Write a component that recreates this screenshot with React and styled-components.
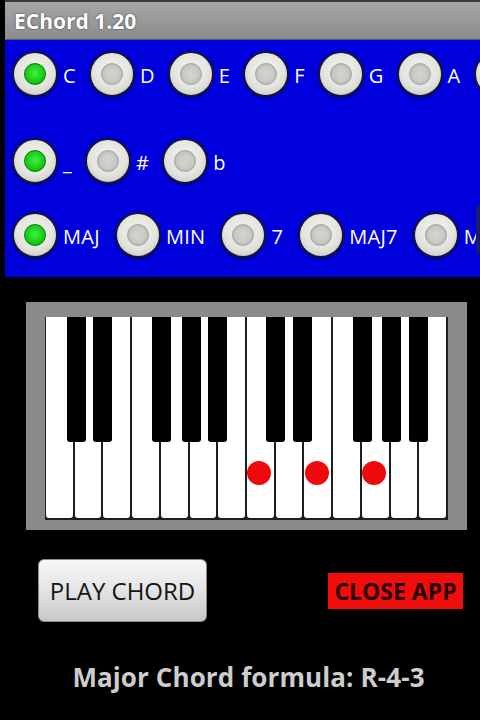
import React from 'react';
import styled, { createGlobalStyle } from 'styled-components';

const Global = createGlobalStyle`
  html, body { margin: 0; padding: 0; background: #000; }
  body { width: 480px; height: 720px; overflow: hidden; font-family: "Open Sans", "Noto Sans", sans-serif; }
  * { box-sizing: border-box; }
`;

const Screen = styled.div`
  width: 480px;
  height: 720px;
  background: #000;
  padding-left: 5px;
  display: flex;
  flex-direction: column;
`;

const TitleBar = styled.div`
  height: 40px;
  flex: none;
  border-top: 2px solid #3a3a3a;
  border-bottom: 1px solid #5a5a5a;
  background: linear-gradient(#a6a6a6, #8c8c8c);
  display: flex;
  align-items: center;
  padding-left: 9px;
  color: #fff;
  font-weight: 700;
  font-size: 21px;
  text-shadow: 0 0 2px rgba(0, 0, 0, 0.7);
`;

const Panel = styled.div`
  position: relative;
  height: 237px;
  flex: none;
  background: #0000dc;
  overflow: hidden;
  padding-left: 7px;
`;

const Scroll = styled.div`
  position: absolute;
  right: 0;
  top: 165px;
  width: 4px;
  height: 50px;
  background: #1a1a70;
  border-radius: 2px;
`;

const Row = styled.div`
  display: flex;
  align-items: center;
  white-space: nowrap;
  gap: ${p => p.$gap}px;
  margin-top: ${p => p.$top}px;
`;

const Item = styled.div`
  display: flex;
  align-items: center;
  gap: 5px;
  flex: none;
`;

const RadioOuter = styled.div`
  width: 46px;
  height: 46px;
  border-radius: 50%;
  border: 2px solid #14143c;
  background: radial-gradient(circle at 50% 42%, #f6f6f2 0%, #e4e4de 55%, #bcbcb4 100%);
  box-shadow: 0 1px 2px rgba(0, 0, 0, 0.5);
  display: flex;
  align-items: center;
  justify-content: center;
  flex: none;
`;

const RadioDot = styled.div`
  width: 22px;
  height: 22px;
  border-radius: 50%;
  border: 1px solid ${p => (p.$on ? '#087a08' : '#a4a4a0')};
  background: ${p =>
    p.$on
      ? 'radial-gradient(circle at 50% 45%, #44f044 0%, #14cc14 60%, #0a8a0a 100%)'
      : 'radial-gradient(circle at 50% 50%, #d4d4d0 0%, #cacac6 50%, #a8a8a4 100%)'};
`;

const Label = styled.span`
  color: #fff;
  font-size: 20px;
  line-height: 1;
  padding-top: 4px;
  letter-spacing: 0.3px;
`;

const Frame = styled.div`
  margin: 25px 0 0 21px;
  width: 441px;
  height: 228px;
  flex: none;
  background: #8a8a8a;
  padding: 15px 19px 10px 19px;
`;

const Keys = styled.div`
  position: relative;
  display: flex;
  height: 100%;
  background: #1e1e1e;
  padding-left: 1px;
`;

const WhiteKey = styled.div`
  flex: 1;
  background: #fff;
  margin: 0 2px 2px 0;
  border-radius: 0 0 3px 3px;
`;

const BlackKey = styled.div`
  position: absolute;
  top: 0;
  width: 19px;
  height: 125px;
  background: #000;
  border-radius: 0 0 3px 3px;
`;

const Dot = styled.div`
  position: absolute;
  top: 144px;
  width: 24px;
  height: 24px;
  border-radius: 50%;
  background: #ee0a0a;
`;

const Buttons = styled.div`
  display: flex;
  align-items: center;
  margin-top: 29px;
  padding: 0 17px 0 33px;
`;

const PlayButton = styled.div`
  width: 169px;
  height: 63px;
  border-radius: 6px;
  border: 1px solid #8a8a8a;
  background: linear-gradient(#f6f6f6, #e6e6e6 45%, #c8c8c8);
  color: #141414;
  font-size: 24px;
  display: flex;
  align-items: center;
  justify-content: center;
`;

const CloseButton = styled.div`
  margin-left: auto;
  width: 135px;
  height: 36px;
  background: #f20d0d;
  color: #2a0404;
  font-weight: 700;
  font-size: 23px;
  display: flex;
  align-items: center;
  justify-content: center;
`;

const Formula = styled.div`
  margin-top: 38px;
  padding-left: 12px;
  text-align: center;
  color: #cdcdcd;
  font-weight: 700;
  font-size: 26px;
  letter-spacing: 0.1px;
  line-height: 34px;
`;

const rows = [
  { top: 11, gap: 13, items: ['C', 'D', 'E', 'F', 'G', 'A', 'B'] },
  { top: 41, gap: 13, items: ['_', '#', 'b'] },
  { top: 28, gap: 15, items: ['MAJ', 'MIN', '7', 'MAJ7', 'MIN7'] },
];

const blackLefts = [22, 48, 107, 137, 163, 221, 248, 308, 337, 364];
const dots = [214, 272, 329];

export default function App() {
  return (
    <Screen>
      <Global />
      <TitleBar>EChord 1.20</TitleBar>
      <Panel>
        {rows.map((r, ri) => (
          <Row key={ri} $top={r.top} $gap={r.gap}>
            {r.items.map((t, i) => (
              <Item key={t}>
                <RadioOuter>
                  <RadioDot $on={i === 0} />
                </RadioOuter>
                <Label>{t}</Label>
              </Item>
            ))}
          </Row>
        ))}
        <Scroll />
      </Panel>
      <Frame>
        <Keys>
          {Array.from({ length: 14 }).map((_, i) => (
            <WhiteKey key={i} />
          ))}
          {blackLefts.map(l => (
            <BlackKey key={l} style={{ left: l }} />
          ))}
          {dots.map(c => (
            <Dot key={c} style={{ left: c - 12 }} />
          ))}
        </Keys>
      </Frame>
      <Buttons>
        <PlayButton>PLAY CHORD</PlayButton>
        <CloseButton>CLOSE APP</CloseButton>
      </Buttons>
      <Formula>Major Chord formula: R-4-3</Formula>
    </Screen>
  );
}
